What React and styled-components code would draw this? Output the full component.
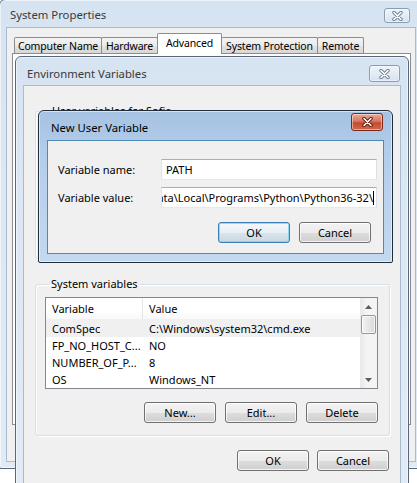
import React from "react";
import styled, { createGlobalStyle } from "styled-components";

const FONT = `"Noto Sans", "Open Sans", sans-serif`;

const GlobalStyle = createGlobalStyle`
  html, body {
    margin: 0;
    padding: 0;
    background: #ffffff;
  }
  body {
    font-family: ${FONT};
    font-size: 11px;
    color: #000;
  }
`;

const Desktop = styled.div`
  position: relative;
  width: 417px;
  height: 483px;
  overflow: hidden;
  background: #ffffff;
`;

// a window frame sitting on the desktop
const Frame = styled.div`
  position: absolute;
  left: ${(p) => p.$x}px;
  top: ${(p) => p.$y}px;
  width: ${(p) => p.$w}px;
  height: ${(p) => p.$h}px;
  box-sizing: border-box;
  display: flex;
  flex-direction: column;
  padding: 0 ${(p) => p.$pad}px ${(p) => p.$pad}px;
  border: 1px solid ${(p) => (p.$active ? "#1f2d3d" : "#58677a")};
  border-radius: 6px 6px 2px 2px;
  background: ${(p) =>
    p.$active
      ? "linear-gradient(180deg, #a6c2e2 0%, #b4cdea 30%, #c3d9ef 100%)"
      : "linear-gradient(180deg, #d6e3f1 0%, #dce7f3 35%, #e2ebf5 100%)"};
  box-shadow: inset 0 0 0 1px rgba(255, 255, 255, 0.55);
`;

const TitleBar = styled.div`
  height: ${(p) => p.$h}px;
  flex: none;
  display: flex;
  align-items: flex-start;
  justify-content: space-between;
`;

const Title = styled.div`
  padding: ${(p) => p.$top}px 0 0 ${(p) => p.$left}px;
  font-size: 11.3px;
  color: ${(p) => (p.$active ? "#000" : "#3a3a3a")};
`;

const CloseBox = styled.div`
  width: ${(p) => p.$w}px;
  height: ${(p) => p.$h}px;
  margin-top: ${(p) => p.$top}px;
  margin-right: ${(p) => p.$right}px;
  box-sizing: border-box;
  border-radius: 3px;
  display: flex;
  align-items: center;
  justify-content: center;
  border: 1px solid ${(p) => (p.$active ? "#7a2a1c" : "#8d9db0")};
  background: ${(p) =>
    p.$active
      ? "linear-gradient(180deg, #e9a99b 0%, #d9765f 45%, #c24a2f 55%, #d2694d 100%)"
      : "linear-gradient(180deg, #eef3f9 0%, #e3ebf4 50%, #d7e2ee 100%)"};
  box-shadow: inset 0 0 0 1px rgba(255, 255, 255, 0.45);
`;

const CloseGlyph = ({ active }) => (
  <svg width="13" height="10" viewBox="0 0 13 10">
    <path
      d="M3 1.5 L10 8.5 M10 1.5 L3 8.5"
      stroke={active ? "#5a1a0e" : "#6f7f92"}
      strokeWidth="3.4"
      strokeLinecap="round"
      fill="none"
    />
    <path
      d="M3 1.5 L10 8.5 M10 1.5 L3 8.5"
      stroke="#ffffff"
      strokeWidth="1.6"
      strokeLinecap="round"
      fill="none"
    />
  </svg>
);

const Body = styled.div`
  flex: 1;
  min-height: 0;
  box-sizing: border-box;
  background: #f0f0f0;
  border: 1px solid ${(p) => (p.$active ? "#4f89b5" : "#a9bccf")};
  display: flex;
  flex-direction: column;
  padding: ${(p) => p.$pad || "0"};
`;

/* ---------- System Properties ---------- */

const TabArea = styled.div`
  padding: 5px 0 0 5px;
`;

const TabRow = styled.div`
  display: flex;
  align-items: flex-end;
  margin-left: 3px;
`;

const Tab = styled.div`
  width: ${(p) => p.$w}px;
  height: ${(p) => (p.$active ? 21 : 16)}px;
  margin-left: -1px;
  margin-bottom: ${(p) => (p.$active ? -1 : 0)}px;
  box-sizing: border-box;
  position: relative;
  z-index: ${(p) => (p.$active ? 1 : 0)};
  border: 1px solid #898c95;
  border-bottom: none;
  border-radius: 2px 2px 0 0;
  background: ${(p) =>
    p.$active
      ? "#ffffff"
      : "linear-gradient(180deg, #f3f3f3 0%, #ebebeb 50%, #e1e1e1 51%, #d8d8d8 100%)"};
  display: flex;
  align-items: ${(p) => (p.$active ? "flex-start" : "center")};
  justify-content: center;
  padding-top: ${(p) => (p.$active ? 2 : 0)}px;
  font-size: 10.5px;
  letter-spacing: -0.15px;
  white-space: nowrap;
`;

const TabPanel = styled.div`
  width: 399px;
  height: 372px;
  box-sizing: border-box;
  border: 1px solid #898c95;
  background: #ffffff;
`;

/* ---------- shared controls ---------- */

const GroupBox = styled.fieldset`
  margin: ${(p) => p.$mt}px 0 0;
  padding: ${(p) => p.$pad};
  height: ${(p) => (p.$h ? `${p.$h}px` : "auto")};
  box-sizing: border-box;
  border: 1px solid #d5dfe5;
  border-radius: 3px;
  box-shadow: inset 1px 1px 0 #ffffff, 1px 1px 0 #ffffff;
  min-width: 0;
`;

const Legend = styled.legend`
  padding: 0 2px;
  margin-left: 4px;
  font-size: 11px;
  line-height: 16px;
  color: #000;
`;

const Button = styled.button`
  width: 72px;
  height: 21px;
  box-sizing: border-box;
  padding: 0;
  font-family: ${FONT};
  font-size: 11px;
  color: #000;
  border: 1px solid ${(p) => (p.$default ? "#3c7fb1" : "#707070")};
  border-radius: 3px;
  background: ${(p) =>
    p.$default
      ? "linear-gradient(180deg, #f4f8fb 0%, #e8f0f6 50%, #d9e4ec 51%, #cad8e3 100%)"
      : "linear-gradient(180deg, #f3f3f3 0%, #ebebeb 50%, #dddddd 51%, #cfcfcf 100%)"};
  box-shadow: inset 0 0 0 1px
    ${(p) => (p.$default ? "rgba(120, 210, 245, 0.8)" : "rgba(255, 255, 255, 0.75)")};
`;

const ButtonRow = styled.div`
  display: flex;
  justify-content: flex-end;
  gap: ${(p) => p.$gap || 9}px;
  margin-top: ${(p) => p.$mt}px;
  padding-right: ${(p) => p.$pr || 0}px;
`;

/* ---------- Environment Variables ---------- */

const ListBox = styled.div`
  height: 92px;
  box-sizing: border-box;
  border: 1px solid #828790;
  background: #ffffff;
  display: flex;
`;

const ListMain = styled.div`
  flex: 1;
  display: flex;
  flex-direction: column;
`;

const HeaderRow = styled.div`
  height: 22px;
  display: grid;
  grid-template-columns: 97px 1fr;
  background: linear-gradient(180deg, #ffffff 0%, #ffffff 60%, #f7f8f9 100%);
  border-bottom: 1px solid #f0f0f0;
  box-sizing: border-box;
`;

const HeaderCell = styled.div`
  display: flex;
  align-items: center;
  padding-left: 6px;
  border-right: ${(p) => (p.$sep ? "1px solid #e3e5e8" : "none")};
`;

const Row = styled.div`
  height: 17px;
  display: grid;
  grid-template-columns: 97px 1fr;
  background: ${(p) => (p.$selected ? "#f0f0f0" : "transparent")};
`;

const Cell = styled.div`
  display: flex;
  align-items: center;
  padding-left: 6px;
  white-space: nowrap;
  overflow: hidden;
`;

const ScrollBar = styled.div`
  width: 17px;
  display: flex;
  flex-direction: column;
  align-items: center;
  background: linear-gradient(90deg, #e8e8e8 0%, #f4f4f4 40%, #f4f4f4 100%);
`;

const Arrow = styled.div`
  height: 17px;
  width: 17px;
  display: flex;
  align-items: center;
  justify-content: center;
`;

const Thumb = styled.div`
  width: 15px;
  height: 19px;
  box-sizing: border-box;
  border: 1px solid #979797;
  border-radius: 2px;
  background: linear-gradient(90deg, #f3f3f3 0%, #e6e6e6 50%, #d9d9d9 100%);
  box-shadow: inset 0 0 0 1px rgba(255, 255, 255, 0.7);
`;

const Track = styled.div`
  flex: 1;
`;

const Tri = ({ down }) => (
  <svg width="7" height="4" viewBox="0 0 7 4">
    <path d={down ? "M0 0 L7 0 L3.5 4 Z" : "M0 4 L7 4 L3.5 0 Z"} fill="#5c5c5c" />
  </svg>
);

/* ---------- New User Variable ---------- */

const FormGrid = styled.div`
  display: grid;
  grid-template-columns: 103px 216px;
  row-gap: 7px;
  align-items: center;
  margin-top: 18px;
`;

const Label = styled.div`
  font-size: 11px;
`;

const Field = styled.div`
  height: 21px;
  box-sizing: border-box;
  border: 1px solid;
  border-color: #abadb3 #dbdfe6 #e3e9ef #e2e3ea;
  background: #ffffff;
  display: flex;
  align-items: center;
  justify-content: ${(p) => (p.$scrolled ? "flex-end" : "flex-start")};
  padding: 0 ${(p) => (p.$scrolled ? 2 : 4)}px;
  overflow: hidden;
  white-space: nowrap;
`;

const Caret = styled.span`
  display: inline-block;
  width: 1px;
  height: 14px;
  background: #000;
  flex: none;
`;

const rows = [
  { name: "ComSpec", value: "C:\\Windows\\system32\\cmd.exe", selected: true },
  { name: "FP_NO_HOST_C...", value: "NO" },
  { name: "NUMBER_OF_P...", value: "8" },
  { name: "OS", value: "Windows_NT" },
];

const tabs = [
  { label: "Computer Name", w: 88 },
  { label: "Hardware", w: 57 },
  { label: "Advanced", w: 65, active: true },
  { label: "System Protection", w: 97 },
  { label: "Remote", w: 47 },
];

export default function App() {
  return (
    <Desktop>
      <GlobalStyle />

      <Frame $x={-1} $y={-1} $w={424} $h={470} $pad={6}>
        <TitleBar $h={27}>
          <Title $top={7} $left={4}>System Properties</Title>
          <CloseBox $w={26} $h={15} $top={8} $right={6}>
            <CloseGlyph />
          </CloseBox>
        </TitleBar>
        <Body>
          <TabArea>
            <TabRow>
              {tabs.map((t) => (
                <Tab key={t.label} $w={t.w} $active={t.active}>
                  {t.label}
                </Tab>
              ))}
            </TabRow>
            <TabPanel />
          </TabArea>
        </Body>
      </Frame>

      <Frame $x={15} $y={56} $w={394} $h={440} $pad={7}>
        <TitleBar $h={28}>
          <Title $top={9} $left={4}>Environment Variables</Title>
          <CloseBox $w={31} $h={17} $top={8} $right={1}>
            <CloseGlyph />
          </CloseBox>
        </TitleBar>
        <Body $pad="0 10px 0 11px">
          <GroupBox $mt={17} $h={156} $pad="0 10px">
            <Legend>User variables for Sofia</Legend>
          </GroupBox>
          <GroupBox $mt={17} $pad="5px 11px 12px 9px">
            <Legend>System variables</Legend>
            <ListBox>
              <ListMain>
                <HeaderRow>
                  <HeaderCell $sep>Variable</HeaderCell>
                  <HeaderCell>Value</HeaderCell>
                </HeaderRow>
                {rows.map((r) => (
                  <Row key={r.name} $selected={r.selected}>
                    <Cell>{r.name}</Cell>
                    <Cell>{r.value}</Cell>
                  </Row>
                ))}
              </ListMain>
              <ScrollBar>
                <Arrow>
                  <Tri />
                </Arrow>
                <Thumb />
                <Track />
                <Arrow>
                  <Tri down />
                </Arrow>
              </ScrollBar>
            </ListBox>
            <ButtonRow $mt={13} $gap={9}>
              <Button>New...</Button>
              <Button>Edit...</Button>
              <Button>Delete</Button>
            </ButtonRow>
          </GroupBox>
          <ButtonRow $mt={14} $gap={8} $pr={1}>
            <Button>OK</Button>
            <Button>Cancel</Button>
          </ButtonRow>
        </Body>
      </Frame>

      <Frame $x={38} $y={110} $w={355} $h={153} $pad={8} $active>
        <TitleBar $h={29}>
          <Title $top={9} $left={4} $active>
            New User Variable
          </Title>
          <CloseBox $w={32} $h={18} $top={2} $right={1} $active>
            <CloseGlyph active />
          </CloseBox>
        </TitleBar>
        <Body $active $pad="0 0 0 10px">
          <FormGrid>
            <Label>Variable name:</Label>
            <Field>PATH</Field>
            <Label>Variable value:</Label>
            <Field $scrolled>
              <span>AppData\Local\Programs\Python\Python36-32\</span>
              <Caret />
            </Field>
          </FormGrid>
          <ButtonRow $mt={14} $gap={9} $pr={12}>
            <Button $default>OK</Button>
            <Button>Cancel</Button>
          </ButtonRow>
        </Body>
      </Frame>
    </Desktop>
  );
}
